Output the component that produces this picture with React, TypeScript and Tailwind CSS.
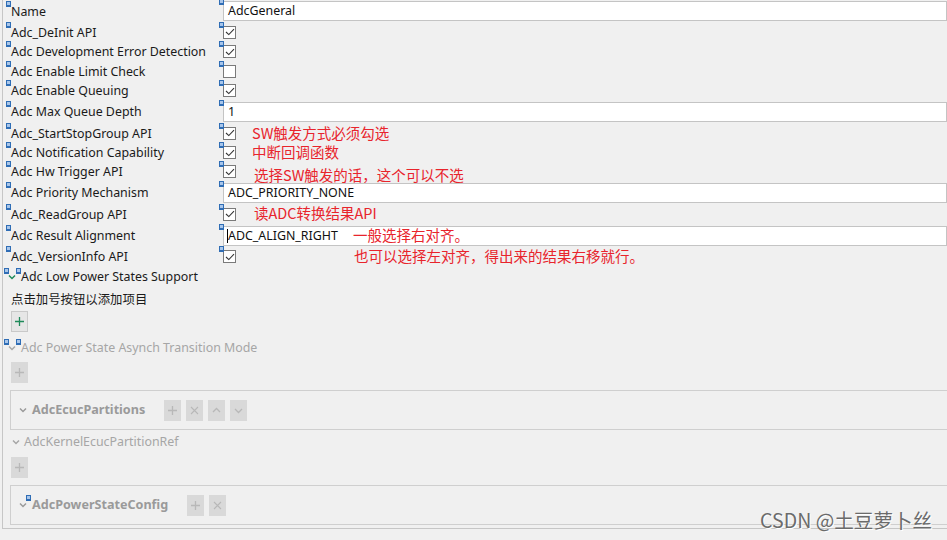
import React from 'react';

const FONT = { fontFamily: '"Noto Sans", "Noto Sans CJK SC", sans-serif' };
const CJK = { fontFamily: '"Noto Sans CJK SC", "Noto Sans", sans-serif' };

function Mark({ className = '' }: { className?: string }) {
  return (
    <svg width="5" height="6" viewBox="0 0 5 6" className={className}>
      <rect x="0" y="0" width="5" height="6" fill="#2f6db5" />
      <rect x="1" y="1" width="3" height="3" fill="#a9c6ea" />
    </svg>
  );
}

function Check({ checked }: { checked: boolean }) {
  return (
    <div className="relative w-[13px] h-[13px] bg-white border border-[#7a7a7a] flex items-center justify-center">
      <Mark className="absolute -left-[5px] -top-[5px]" />
      {checked && (
        <svg width="10" height="8" viewBox="0 0 10 8">
          <path d="M1 4 L3.8 6.6 L9 1.2" fill="none" stroke="#333" strokeWidth="1.1" />
        </svg>
      )}
    </div>
  );
}

function Field({ value, cursor }: { value: string; cursor?: boolean }) {
  return (
    <div className="relative flex-1 h-[20px] bg-white border border-[#c4c4c4] flex items-center pl-[4px] pt-[1px] text-[12.4px] text-[#111]">
      <Mark className="absolute -left-[5px] -top-[3px]" />
      {cursor && <span className="w-px h-[14px] bg-black -ml-[1px]" />}
      {value}
    </div>
  );
}

function Label({ text }: { text: string }) {
  return (
    <div className="relative w-[220px] shrink-0 pl-[8px] pt-[2px] text-[12.4px] text-[#1a1a1a] leading-none">
      <Mark className="absolute left-[3px] -top-[3px]" />
      {text}
    </div>
  );
}

function Chevron({ color }: { color: string }) {
  return (
    <svg width="8" height="6" viewBox="0 0 8 6">
      <path d="M1 1.5 L4 4.5 L7 1.5" fill="none" stroke={color} strokeWidth="1.5" />
    </svg>
  );
}

function Btn({ glyph, enabled }: { glyph: 'plus' | 'x' | 'up' | 'down'; enabled?: boolean }) {
  const stroke = enabled ? '#1f8a5a' : '#b8b8b8';
  return (
    <div
      className={
        'w-[17px] h-[21px] flex items-center justify-center border ' +
        (enabled ? 'bg-[#e6e6e6] border-[#c9c9c9]' : 'bg-[#d9d9d9] border-[#d9d9d9]')
      }
    >
      <svg width="11" height="11" viewBox="0 0 11 11">
        {glyph === 'plus' && <path d="M5.5 1 V10 M1 5.5 H10" stroke={stroke} strokeWidth="1.3" />}
        {glyph === 'x' && <path d="M2 2 L9 9 M9 2 L2 9" stroke={stroke} strokeWidth="1.1" />}
        {glyph === 'up' && <path d="M2 7 L5.5 3.5 L9 7" fill="none" stroke={stroke} strokeWidth="1.3" />}
        {glyph === 'down' && <path d="M2 4 L5.5 7.5 L9 4" fill="none" stroke={stroke} strokeWidth="1.3" />}
      </svg>
    </div>
  );
}

function Note({ children, className = '' }: { children: React.ReactNode; className?: string }) {
  return (
    <span className={'text-[14.5px] text-[#e8242c] leading-none whitespace-nowrap ' + className} style={CJK}>
      {children}
    </span>
  );
}

type Row = {
  label: string;
  h: number;
  kind: 'check' | 'field';
  checked?: boolean;
  value?: string;
  note?: React.ReactNode;
};

const ROWS: Row[] = [
  { label: 'Name', h: 22, kind: 'field', value: 'AdcGeneral' },
  { label: 'Adc_DeInit API', h: 20, kind: 'check', checked: true },
  { label: 'Adc Development Error Detection', h: 19, kind: 'check', checked: true },
  { label: 'Adc Enable Limit Check', h: 20, kind: 'check', checked: false },
  { label: 'Adc Enable Queuing', h: 19, kind: 'check', checked: true },
  { label: 'Adc Max Queue Depth', h: 23, kind: 'field', value: '1' },
  { label: 'Adc_StartStopGroup API', h: 20, kind: 'check', checked: true, note: <Note className="ml-[16px]">SW触发方式必须勾选</Note> },
  { label: 'Adc Notification Capability', h: 19, kind: 'check', checked: true, note: <Note className="ml-[16px]">中断回调函数</Note> },
  { label: 'Adc Hw Trigger API', h: 19, kind: 'check', checked: true, note: <Note className="ml-[18px] mt-[7px]">选择SW触发的话，这个可以不选</Note> },
  { label: 'Adc Priority Mechanism', h: 23, kind: 'field', value: 'ADC_PRIORITY_NONE' },
  { label: 'Adc_ReadGroup API', h: 20, kind: 'check', checked: true, note: <Note className="ml-[18px] -mt-[1px]">读ADC转换结果API</Note> },
  { label: 'Adc Result Alignment', h: 23, kind: 'field', value: 'ADC_ALIGN_RIGHT' },
  { label: 'Adc_VersionInfo API', h: 19, kind: 'check', checked: true, note: <Note className="ml-[118px]">也可以选择左对齐，得出来的结果右移就行。</Note> },
];

export default function App() {
  return (
    <div className="w-[947px] h-[540px] bg-[#f0f0f0] overflow-hidden relative" style={FONT}>
      <div className="ml-[2px] w-[945px] h-[529px] border-l border-b border-[#c6c6c6] flex flex-col">
        {ROWS.map((r, i) => (
          <div key={r.label} className="flex items-center shrink-0" style={{ height: r.h }}>
            <Label text={r.label} />
            {r.kind === 'check' ? (
              <div className="flex items-center">
                <Check checked={!!r.checked} />
                {r.note}
              </div>
            ) : (
              <div className="relative flex-1 flex">
                <Field value={r.value || ''} cursor={i === 11} />
                {i === 11 && (
                  <Note className="absolute left-[130px] top-[2px]">一般选择右对齐。</Note>
                )}
              </div>
            )}
          </div>
        ))}

        <div className="h-[21px] flex items-center pl-[5px] gap-[1px] text-[12.4px] text-[#1a1a1a] shrink-0">
          <div className="relative flex items-center">
            <Mark className="absolute -left-[4px] -top-[6px]" />
            <Chevron color="#1f8a5a" />
            <Mark className="absolute left-[8px] -top-[6px]" />
          </div>
          <span className="ml-[4px] pt-[1px]">Adc Low Power States Support</span>
        </div>
        <div className="h-[23px] flex items-center pl-[8px] pt-[1px] text-[12.4px] text-[#1a1a1a] shrink-0" style={CJK}>
          点击加号按钮以添加项目
        </div>
        <div className="pl-[8px] pt-[1px] shrink-0">
          <Btn glyph="plus" enabled />
        </div>

        <div className="h-[28px] mt-[2px] flex items-center pl-[5px] text-[12.4px] text-[#a6a6a6] shrink-0">
          <div className="relative flex items-center">
            <Mark className="absolute -left-[4px] -top-[6px]" />
            <Chevron color="#a6a6a6" />
            <Mark className="absolute left-[8px] -top-[6px]" />
          </div>
          <span className="ml-[5px]">Adc Power State Asynch Transition Mode</span>
        </div>
        <div className="pl-[8px] shrink-0">
          <Btn glyph="plus" />
        </div>

        <div className="mt-[7px] ml-[7px] h-[40px] border border-[#cfcfcf] border-r-0 flex items-center pl-[8px] shrink-0">
          <Chevron color="#9a9a9a" />
          <span className="ml-[5px] text-[12.6px] font-bold text-[#9a9a9a] w-[132px]">AdcEcucPartitions</span>
          <div className="flex gap-[5px]">
            <Btn glyph="plus" />
            <Btn glyph="x" />
            <Btn glyph="up" />
            <Btn glyph="down" />
          </div>
        </div>

        <div className="h-[22px] mt-[1px] flex items-center pl-[9px] text-[12.4px] text-[#a6a6a6] shrink-0">
          <Chevron color="#a6a6a6" />
          <span className="ml-[4px]">AdcKernelEcucPartitionRef</span>
        </div>
        <div className="pl-[8px] mt-[4px] shrink-0">
          <Btn glyph="plus" />
        </div>

        <div className="mt-[7px] ml-[7px] h-[40px] border border-[#cfcfcf] border-r-0 flex items-center pl-[8px] shrink-0">
          <div className="relative flex items-center">
            <Chevron color="#9a9a9a" />
            <Mark className="absolute left-[7px] -top-[7px]" />
          </div>
          <span className="ml-[5px] text-[12.6px] font-bold text-[#9a9a9a] w-[155px]">AdcPowerStateConfig</span>
          <div className="flex gap-[5px]">
            <Btn glyph="plus" />
            <Btn glyph="x" />
          </div>
        </div>
      </div>

      <div
        className="absolute left-[760px] top-[510px] text-[19.6px] text-[#6b6b6b] leading-none whitespace-nowrap"
        style={{ ...CJK, textShadow: '1px 1px 0 #ffffff' }}
      >
        CSDN @土豆萝卜丝
      </div>
    </div>
  );
}
